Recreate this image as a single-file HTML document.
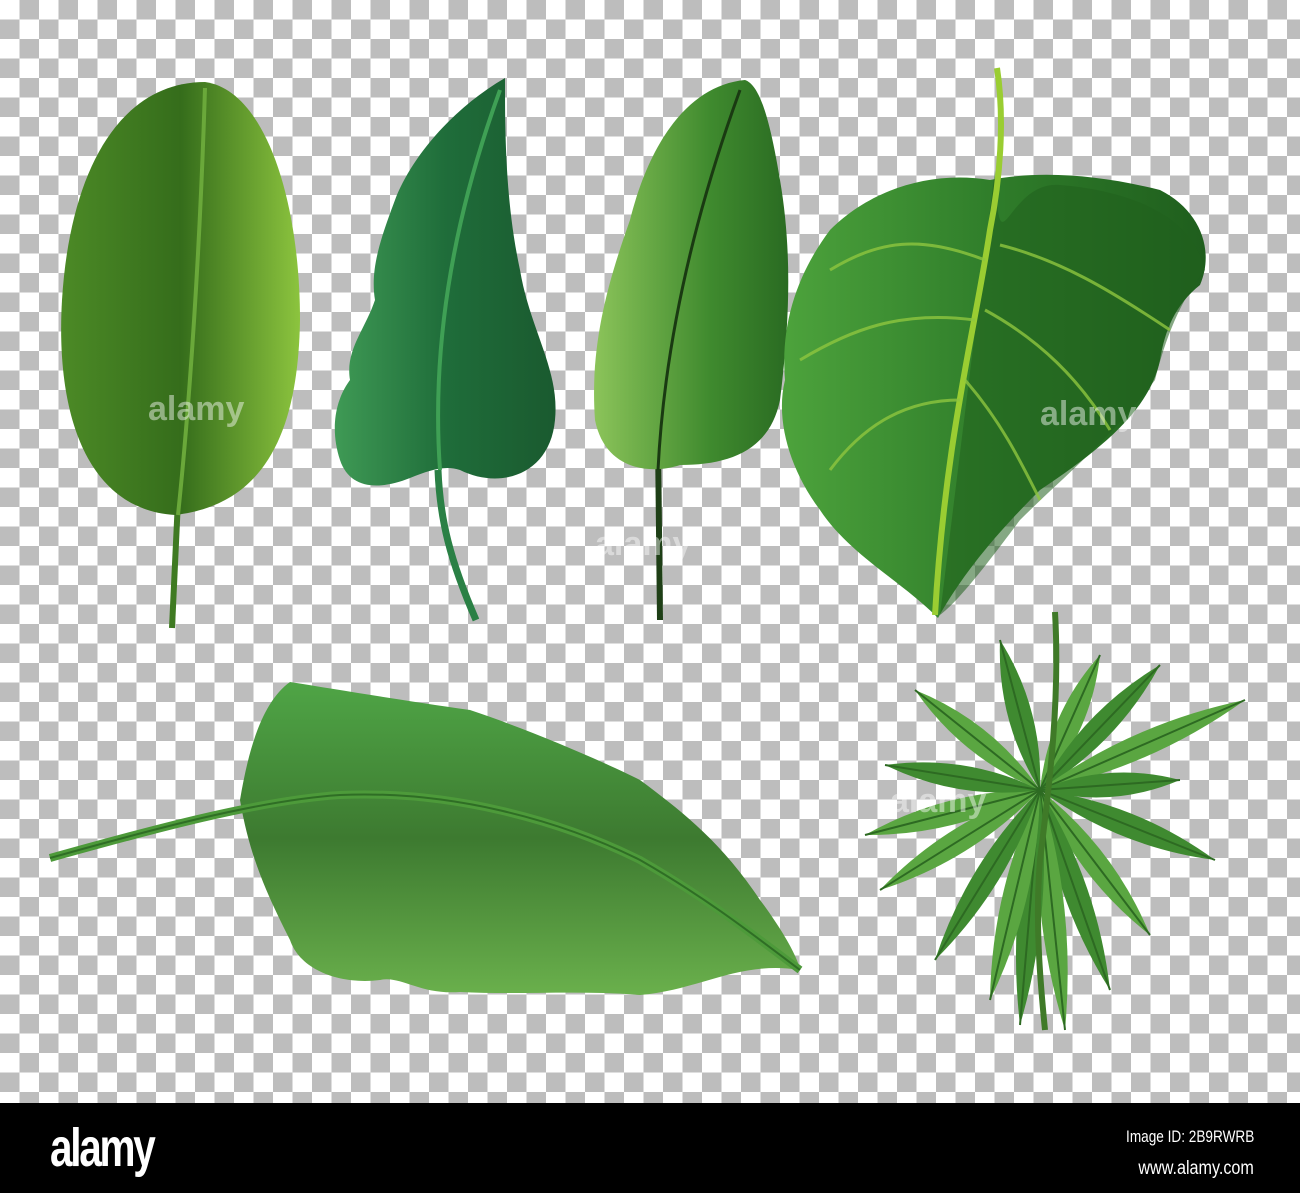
<!DOCTYPE html>
<html><head><meta charset="utf-8"><style>
html,body{margin:0;padding:0}
body{width:1300px;height:1193px;position:relative;overflow:hidden;background:#fff}
#chk{position:absolute;left:0;top:0;width:1300px;height:1103px;
background-color:#fff;
background-image:conic-gradient(#bdbdbd 25%,transparent 0 50%,#bdbdbd 0 75%,transparent 0);
background-size:39px 39px;}
#bar{position:absolute;left:0;top:1103px;width:1300px;height:90px;background:#000;color:#fff;font-family:"Liberation Sans",sans-serif}
#logo{position:absolute;left:50px;top:14px;font-size:54px;font-weight:bold;letter-spacing:-3px;transform:scaleX(0.75);transform-origin:left}
#id{position:absolute;right:46px;top:24px;font-size:17px;transform:scaleX(0.8);transform-origin:right}
#www{position:absolute;right:46px;top:55px;font-size:19px;transform:scaleX(0.85);transform-origin:right}
svg{position:absolute;left:0;top:0}
.wm{font-family:"Liberation Sans",sans-serif;font-weight:bold;fill:#fff;opacity:.45}
</style></head><body>
<div id="chk"></div>
<svg width="1300" height="1103" viewBox="0 0 1300 1103">
<defs>
<linearGradient id="g1" x1="0" x2="1"><stop offset="0" stop-color="#4c8a26"/><stop offset=".5" stop-color="#356d1b"/><stop offset="1" stop-color="#8cc43e"/></linearGradient>
<linearGradient id="g2" x1="0" x2="1"><stop offset="0" stop-color="#3f9a55"/><stop offset=".5" stop-color="#1f6d3a"/><stop offset="1" stop-color="#1a5a2f"/></linearGradient>
<linearGradient id="g3" x1="0" x2="1"><stop offset="0" stop-color="#8cc45a"/><stop offset=".6" stop-color="#3f8a2e"/><stop offset="1" stop-color="#2a6b22"/></linearGradient>
<linearGradient id="g4" x1="0" x2="1"><stop offset="0" stop-color="#4da33c"/><stop offset=".5" stop-color="#2f7d2a"/><stop offset="1" stop-color="#1f5e1d"/></linearGradient>
<linearGradient id="g5" x1="0" y1="0" x2="0" y2="1"><stop offset="0" stop-color="#4fa546"/><stop offset=".5" stop-color="#3d7a30"/><stop offset="1" stop-color="#6ab04c"/></linearGradient>
</defs>
<!-- leaf 1 -->
<path d="M172,628 L178,500" stroke="#3f7a22" stroke-width="6" fill="none"/>
<path d="M175,515 C90,510 55,420 62,300 C70,170 120,82 205,82 C265,90 300,200 300,320 C298,440 260,505 175,515Z" fill="url(#g1)"/>
<path d="M205,88 C200,250 190,400 178,515" stroke="#6aa83a" stroke-width="4" fill="none"/>
<!-- leaf 2 -->
<path d="M476,620 C450,560 440,520 438,470" stroke="#2a8045" stroke-width="7" fill="none"/>
<path d="M505,78 C450,110 410,160 395,200 C380,240 370,270 375,300 C365,330 345,350 350,380 C335,400 330,430 340,460 C350,490 380,490 410,478 C430,470 445,465 460,470 C500,490 550,475 555,420 C560,370 530,330 520,270 C505,200 505,130 505,78Z" fill="url(#g2)"/>
<path d="M500,90 C460,200 430,330 440,470" stroke="#3fa055" stroke-width="4" fill="none"/>
<!-- leaf 3 -->
<path d="M660,620 L658,440" stroke="#1e3f16" stroke-width="6" fill="none"/>
<path d="M745,80 C690,85 650,140 630,220 C605,290 590,350 595,420 C605,470 650,475 680,465 C730,465 770,450 780,400 C790,320 792,250 780,180 C770,120 760,85 745,80Z" fill="url(#g3)"/>
<path d="M740,90 C700,200 665,330 658,470" stroke="#1a3a12" stroke-width="3" fill="none"/>
<!-- leaf 4 -->
<path d="M938,618 C900,580 850,555 820,510 C790,470 775,420 785,380 C780,320 800,270 830,230 C870,190 930,170 990,180 C1040,170 1100,175 1160,190 C1200,210 1215,250 1200,285 C1175,305 1165,330 1160,360 C1150,410 1100,450 1040,490 C1000,530 965,570 938,618Z" fill="url(#g4)"/>
<path d="M995,170 C1000,280 1005,180 1060,185 C1120,190 1190,210 1205,270 C1180,300 1165,340 1155,380 C1110,440 1060,480 1020,520 C990,560 960,600 940,615 Z" fill="#21611e" opacity=".55"/>
<path d="M997,68 C1005,120 1000,180 990,230 C975,330 945,440 935,615" stroke="#9acd32" stroke-width="6" fill="none"/>
<g stroke="#8ec63f" stroke-width="3" fill="none" opacity=".8">
<path d="M985,260 C920,235 880,240 830,270"/><path d="M975,320 C900,310 850,330 800,360"/><path d="M960,400 C900,400 860,430 830,470"/>
<path d="M1000,245 C1060,260 1110,290 1170,330"/><path d="M985,310 C1040,340 1080,380 1110,430"/><path d="M965,380 C1000,420 1020,460 1040,500"/>
</g>
<!-- leaf 5 banana -->
<path d="M240,800 C250,740 265,700 290,682 C340,690 400,700 470,710 C530,730 600,760 640,780 C680,810 720,840 760,900 C790,940 800,965 800,970 C740,960 700,990 640,995 C580,990 520,995 460,992 C420,995 400,975 380,980 C340,985 300,970 290,940 C270,900 250,860 240,800Z" fill="url(#g5)"/>
<path d="M50,858 C150,830 260,800 340,795 C450,790 560,820 640,860 C710,900 760,940 800,970" stroke="#4d9a3a" stroke-width="8" fill="none"/>
<path d="M50,858 C150,830 260,800 340,795 C450,790 560,820 640,860 C710,900 760,940 800,970" stroke="#2f6e25" stroke-width="2" fill="none"/>
<!-- palm -->
<g id="palm"></g>
<path d="M1055,612 C1060,700 1050,780 1040,860 C1035,920 1040,980 1045,1030" stroke="#3f7a28" stroke-width="6" fill="none"/>
<!-- watermarks -->
<text class="wm" x="148" y="420" font-size="34">alamy</text>
<text class="wm" x="1040" y="425" font-size="34">alamy</text>
<text class="wm" x="890" y="812" font-size="34">alamy</text>
<text class="wm" x="595" y="555" font-size="34" opacity=".3">alamy</text>
</svg>
<div id="bar"><div id="logo">alamy</div><div id="id">Image ID: 2B9RWRB</div><div id="www">www.alamy.com</div></div>
<script>
var tips=[[865,835],[885,765],[915,690],[1000,640],[1100,655],[1160,665],[1245,700],[1215,860],[1150,935],[1110,990],[1065,1030],[1020,1025],[990,1000],[935,960],[880,890],[1180,780]];
var c=[1040,790],g=document.getElementById('palm'),s='';
tips.forEach(function(t,i){var dx=t[0]-c[0],dy=t[1]-c[1],L=Math.hypot(dx,dy),nx=-dy/L,ny=dx/L,w=24;
var mx=c[0]+dx*.5,my=c[1]+dy*.5;
var col=i%2?'#3f8a30':'#5aa641';
s+='<path d="M'+c[0]+','+c[1]+' Q'+(mx+nx*w)+','+(my+ny*w)+' '+t[0]+','+t[1]+' Q'+(mx-nx*w)+','+(my-ny*w)+' '+c[0]+','+c[1]+'Z" fill="'+col+'"/>';
s+='<path d="M'+c[0]+','+c[1]+' L'+t[0]+','+t[1]+'" stroke="#2d6a22" stroke-width="2"/>';});
g.innerHTML=s;
</script>
</body></html>
